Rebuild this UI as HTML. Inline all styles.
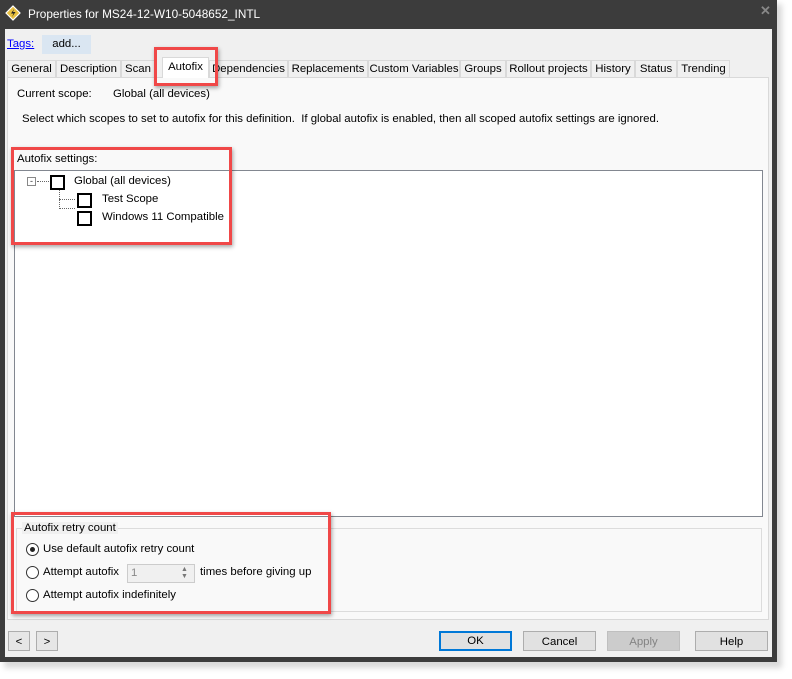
<!DOCTYPE html>
<html><head><style>
body{margin:0;width:792px;height:679px;background:#fff;font-family:"Liberation Sans",sans-serif;font-size:11.4px;color:#000;position:relative;overflow:hidden}
.a{position:absolute;white-space:nowrap}
.tab{position:absolute;top:60px;height:17px;border:1px solid #d9d9d9;border-bottom:none;background:#f0f0f0;text-align:center;line-height:17px;box-sizing:border-box;white-space:nowrap;overflow:hidden}
.red{position:absolute;border:3px solid #f04848;box-shadow:1px 2px 4px rgba(0,0,0,.35)}
.cb{position:absolute;width:11px;height:11px;border:2px solid #000;background:#fff}
.rad{position:absolute;width:11px;height:11px;border:1px solid #333;border-radius:50%;background:#fff}
.btn{position:absolute;top:631px;height:20px;border:1px solid #adadad;background:#e1e1e1;text-align:center;line-height:20px;box-sizing:border-box}
</style></head><body>
<div class="a" style="left:4px;top:4px;width:778px;height:664px;background:rgba(0,0,0,.15);filter:blur(3px)"></div>
<div class="a" style="left:0;top:0;width:777px;height:662px;background:#3c3c3c"></div>
<svg class="a" style="left:5px;top:5px" width="16" height="16" viewBox="0 0 16 16"><path d="M8 1L15 8L8 15L1 8Z" fill="#e8c040" stroke="#fff" stroke-width="1.2"/><path d="M9 4L6 8.5H8.5L7 12L10.5 7H8Z" fill="#222"/></svg>
<div class="a" style="left:28px;top:7px;color:#fff;font-size:11.8px">Properties for MS24-12-W10-5048652_INTL</div>
<div class="a" style="left:760px;top:3px;color:#888;font-size:13px;font-weight:bold">✕</div>
<div class="a" style="left:5px;top:29px;width:767px;height:628px;background:#f0f0f0"></div>
<div class="a" style="left:7px;top:38px;color:#00f;text-decoration:underline">Tags:</div>
<div class="a" style="left:42px;top:35px;width:49px;height:19px;background:#dae6f2;text-align:center;line-height:19px">add...</div>
<div class="a" style="left:7px;top:77px;width:762px;height:543px;background:#f9f9f9;border:1px solid #d9d9d9;box-sizing:border-box"></div>
<div class="tab" style="left:7px;width:49px">General</div>
<div class="tab" style="left:56px;width:65px">Description</div>
<div class="tab" style="left:121px;width:34px">Scan</div>
<div class="tab" style="left:162px;top:57px;height:21px;width:47px;background:#fff;line-height:19px;z-index:2">Autofix</div>
<div class="tab" style="left:209px;width:79px">Dependencies</div>
<div class="tab" style="left:288px;width:80px">Replacements</div>
<div class="tab" style="left:368px;width:92px">Custom Variables</div>
<div class="tab" style="left:460px;width:46px">Groups</div>
<div class="tab" style="left:506px;width:85px">Rollout projects</div>
<div class="tab" style="left:591px;width:44px">History</div>
<div class="tab" style="left:635px;width:42px">Status</div>
<div class="tab" style="left:677px;width:53px">Trending</div>
<div class="a" style="left:17px;top:88px">Current scope:</div>
<div class="a" style="left:113px;top:88px">Global (all devices)</div>
<div class="a" style="left:22px;top:113px">Select which scopes to set to autofix for this definition.&nbsp; If global autofix is enabled, then all scoped autofix settings are ignored.</div>
<div class="a" style="left:17px;top:153px">Autofix settings:</div>
<div class="a" style="left:14px;top:170px;width:749px;height:347px;background:#fff;border:1px solid #828790;box-sizing:border-box"></div>
<div class="a" style="left:27px;top:177px;width:7px;height:7px;border:1px solid #888;background:#fff;font-size:9px;line-height:6px;text-align:center;color:#333">-</div>
<div class="a" style="left:37px;top:181px;width:12px;border-top:1px dotted #666"></div>
<div class="a" style="left:59px;top:189px;height:20px;border-left:1px dotted #666"></div>
<div class="a" style="left:59px;top:199px;width:16px;border-top:1px dotted #666"></div>
<div class="a" style="left:59px;top:208px;width:16px;border-top:1px dotted #666"></div>
<div class="cb" style="left:50px;top:175px"></div>
<div class="cb" style="left:77px;top:193px"></div>
<div class="cb" style="left:77px;top:211px"></div>
<div class="a" style="left:74px;top:175px">Global (all devices)</div>
<div class="a" style="left:102px;top:193px">Test Scope</div>
<div class="a" style="left:102px;top:211px">Windows 11 Compatible</div>
<div class="a" style="left:16px;top:528px;width:746px;height:84px;border:1px solid #dcdcdc;box-sizing:border-box"></div>
<div class="a" style="left:22px;top:522px;background:#f0f0f0;padding:0 2px">Autofix retry count</div>
<div class="rad" style="left:26px;top:543px"><div class="a" style="left:3px;top:3px;width:5px;height:5px;border-radius:50%;background:#222"></div></div>
<div class="rad" style="left:26px;top:566px"></div>
<div class="rad" style="left:26px;top:589px"></div>
<div class="a" style="left:43px;top:543px">Use default autofix retry count</div>
<div class="a" style="left:43px;top:566px">Attempt autofix</div>
<div class="a" style="left:127px;top:564px;width:68px;height:19px;border:1px solid #ccc;box-sizing:border-box;background:#f0f0f0;color:#888;padding-left:3px;line-height:17px">1</div>
<div class="a" style="left:181px;top:566px;font-size:7px;color:#777;line-height:7px">▲<br>▼</div>
<div class="a" style="left:200px;top:566px">times before giving up</div>
<div class="a" style="left:43px;top:589px">Attempt autofix indefinitely</div>
<div class="btn" style="left:8px;width:22px;background:#e6e6e6">&lt;</div>
<div class="btn" style="left:36px;width:22px;background:#e6e6e6">&gt;</div>
<div class="btn" style="left:439px;width:73px;border:2px solid #0078d7;line-height:17px">OK</div>
<div class="btn" style="left:523px;width:73px">Cancel</div>
<div class="btn" style="left:607px;width:73px;background:#ccc;border-color:#bfbfbf;color:#838383">Apply</div>
<div class="btn" style="left:695px;width:73px">Help</div>
<div class="red" style="left:154px;top:47px;width:58px;height:33px"></div>
<div class="red" style="left:11px;top:147px;width:215px;height:92px"></div>
<div class="red" style="left:11px;top:512px;width:314px;height:96px"></div>
</body></html>
